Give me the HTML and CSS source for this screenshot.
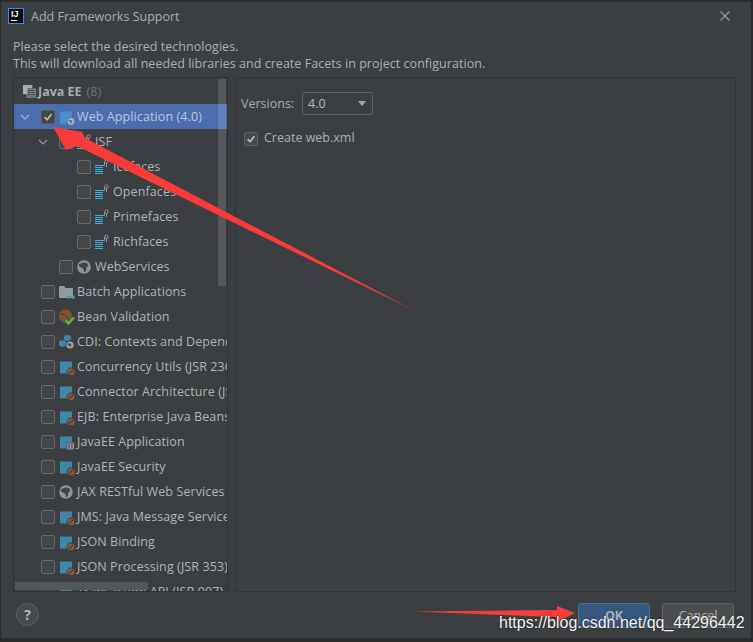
FILE: index.html
```html
<!DOCTYPE html>
<html lang="en">
<head>
<meta charset="utf-8">
<title>Add Frameworks Support</title>
<link rel="stylesheet" href="styles.css">
</head>
<body>
<svg class="defs" width="0" height="0" aria-hidden="true">
  <defs>
    <symbol id="bean" viewBox="0 0 8 8">
      <circle cx="4" cy="4" r="3.6" fill="#8c5a33"/>
      <path d="M1.6 6 6.2 1.8" stroke="#3c3f41" stroke-width="1.1"/>
    </symbol>
    <symbol id="i-module" viewBox="0 0 16 16">
      <rect x="1" y="2.500" width="12" height="12" fill="#3f87a8"/>
      <circle cx="12" cy="13" r="4.4" fill="#3c3f41"/>
      <use href="#bean" x="8" y="9" width="8" height="8"/>
    </symbol>
    <symbol id="i-web" viewBox="0 0 16 16">
      <rect x="1" y="2.500" width="12" height="12" fill="#4a8fc9"/>
      <circle cx="12" cy="12.500" r="4.200" fill="#4b6eaf"/>
      <circle cx="12" cy="12.500" r="3.400" fill="#9fb0c4"/>
      <path d="M10 11h2.600l.6 1.600-1.400 2.400-.6-2.200-1.600-.6z" fill="#4b6eaf"/>
    </symbol>
    <symbol id="i-jsf" viewBox="0 0 16 16">
      <path d="M0 6.500h8M0 8.500h8M0 10.500h8M0 12.500h8M0 14.500h8" stroke="#3ab0e8" stroke-width="1.100"/>
      <path d="M8 6.500h1.500V3" stroke="#9a9da0" stroke-width=".9" fill="none"/>
      <circle cx="11.500" cy="2.600" r="1.700" fill="none" stroke="#9a9da0" stroke-width=".9"/>
      <path d="M11.500 4v4" stroke="#9a9da0" stroke-width=".9"/>
    </symbol>
    <symbol id="i-globe" viewBox="0 0 14 14">
      <circle cx="7" cy="7" r="6.800" fill="#8f9496"/>
      <path d="M2 4.500 6 2.500l4 .5 1.500 3-2 1-.5 4-2 1.500-.5-3.500-2.500-1.500-2-1.500z" fill="#3f4345"/>
    </symbol>
    <symbol id="i-batch" viewBox="0 0 16 16">
      <path d="M0 2h5l1.500 2H14v10H0z" fill="#8f9ba3"/>
      <circle cx="10" cy="13" r="1.800" fill="#4fa84f"/>
      <circle cx="14" cy="13" r="1.800" fill="#35a6dc"/>
    </symbol>
    <symbol id="i-beanv" viewBox="0 0 16 16">
      <circle cx="6.500" cy="7" r="6.800" fill="#7c5230"/>
      <path d="M1 5q5-1 9 6" stroke="#3c3f41" stroke-width="1" fill="none"/>
      <path d="M6.500 11.500l3 3 5.500-6" stroke="#5fb83f" stroke-width="2.200" fill="none"/>
    </symbol>
    <symbol id="i-cdi" viewBox="0 0 16 16">
      <ellipse cx="8.500" cy="4" rx="3.800" ry="3" fill="#3f87a8"/>
      <ellipse cx="3.500" cy="9.500" rx="4" ry="3.200" fill="#3f87a8"/>
      <circle cx="11" cy="11" r="4.400" fill="#3c3f41"/>
      <circle cx="11" cy="11" r="3.600" fill="#9aa2a8"/>
      <path d="M9 9.500h2.600l.6 1.600-1.400 2.400-.6-2.200-1.600-.6z" fill="#3c3f41"/>
    </symbol>
    <symbol id="i-app" viewBox="0 0 16 16">
      <rect x="1" y="2.500" width="12" height="12" fill="#3f87a8"/>
      <rect x="7.500" y="8" width="8" height="8" fill="#3c3f41"/>
      <path d="M8.500 9h6v6h-6zM8.500 11h6M8.500 13h6M11.500 9v6" fill="none" stroke="#a8adb0" stroke-width=".8"/>
    </symbol>
    <symbol id="i-ee" viewBox="0 0 14 14">
      <path d="M0 0h10v3.500H4.500V10H0z" fill="#a9adb0"/>
      <rect x="4.500" y="4.500" width="8.500" height="8.500" fill="#3c3f41" stroke="#a9adb0"/>
      <path d="M6 7h5.500M6 9h5.500M6 11h5.500" stroke="#a9adb0" stroke-width=".8"/>
    </symbol>
    <symbol id="i-check" viewBox="0 0 14 14">
      <path d="M3 7.200l3 3 5-6.600" fill="none" stroke="#b8bcbe" stroke-width="2"/>
    </symbol>
  </defs>
</svg>

<main class="dialog">
  <header class="titlebar">
    <span class="logo"><span class="logo-text">IJ</span><span class="logo-bar"></span></span>
    <h1 class="title">Add Frameworks Support</h1>
    <svg class="close" viewBox="0 0 10 10"><path d="M.5.5l9 9M9.500.5l-9 9" stroke="#9a9c9e" stroke-width="1.100"/></svg>
  </header>

  <p class="desc">Please select the desired technologies.<br>This will download all needed libraries and create Facets in project configuration.</p>

  <div class="panes">
    <section class="tree">
      <div class="group">
        <svg class="group-icon" viewBox="0 0 14 14"><use href="#i-ee"/></svg>
        <b class="group-name">Java EE</b>
        <span class="group-count">(8)</span>
      </div>

      <div class="row l0 selected">
        <svg class="chev" viewBox="0 0 10 6"><path d="M1 1l4 4 4-4" fill="none" stroke="#a9b4c8" stroke-width="1.200"/></svg>
        <span class="cb on"><svg viewBox="0 0 14 14"><use href="#i-check"/></svg></span>
        <svg class="ico"><use href="#i-web"/></svg>
        <span class="label">Web Application (4.0)</span>
      </div>
      <div class="row l1">
        <svg class="chev" viewBox="0 0 10 6"><path d="M1 1l4 4 4-4" fill="none" stroke="#9a9c9e" stroke-width="1.200"/></svg>
        <span class="cb"></span><svg class="ico"><use href="#i-jsf"/></svg><span class="label">JSF</span>
      </div>
      <div class="row l2"><span class="slot"></span><span class="cb"></span><svg class="ico"><use href="#i-jsf"/></svg><span class="label">Icefaces</span></div>
      <div class="row l2"><span class="slot"></span><span class="cb"></span><svg class="ico"><use href="#i-jsf"/></svg><span class="label">Openfaces</span></div>
      <div class="row l2"><span class="slot"></span><span class="cb"></span><svg class="ico"><use href="#i-jsf"/></svg><span class="label">Primefaces</span></div>
      <div class="row l2"><span class="slot"></span><span class="cb"></span><svg class="ico"><use href="#i-jsf"/></svg><span class="label">Richfaces</span></div>
      <div class="row l1"><span class="slot"></span><span class="cb"></span><svg class="ico"><use href="#i-globe" width="14" height="14" y="1"/></svg><span class="label">WebServices</span></div>
      <div class="row l0"><span class="slot"></span><span class="cb"></span><svg class="ico"><use href="#i-batch"/></svg><span class="label">Batch Applications</span></div>
      <div class="row l0"><span class="slot"></span><span class="cb"></span><svg class="ico"><use href="#i-beanv"/></svg><span class="label">Bean Validation</span></div>
      <div class="row l0"><span class="slot"></span><span class="cb"></span><svg class="ico"><use href="#i-cdi"/></svg><span class="label">CDI: Contexts and Dependency Injection</span></div>
      <div class="row l0"><span class="slot"></span><span class="cb"></span><svg class="ico"><use href="#i-module"/></svg><span class="label">Concurrency Utils (JSR 236)</span></div>
      <div class="row l0"><span class="slot"></span><span class="cb"></span><svg class="ico"><use href="#i-module"/></svg><span class="label">Connector Architecture (JSR 322)</span></div>
      <div class="row l0"><span class="slot"></span><span class="cb"></span><svg class="ico"><use href="#i-module"/></svg><span class="label">EJB: Enterprise Java Beans</span></div>
      <div class="row l0"><span class="slot"></span><span class="cb"></span><svg class="ico"><use href="#i-app"/></svg><span class="label">JavaEE Application</span></div>
      <div class="row l0"><span class="slot"></span><span class="cb"></span><svg class="ico"><use href="#i-module"/></svg><span class="label">JavaEE Security</span></div>
      <div class="row l0"><span class="slot"></span><span class="cb"></span><svg class="ico"><use href="#i-globe" width="14" height="14" y="1"/></svg><span class="label">JAX RESTful Web Services</span></div>
      <div class="row l0"><span class="slot"></span><span class="cb"></span><svg class="ico"><use href="#i-module"/></svg><span class="label">JMS: Java Message Service</span></div>
      <div class="row l0"><span class="slot"></span><span class="cb"></span><svg class="ico"><use href="#i-module"/></svg><span class="label">JSON Binding</span></div>
      <div class="row l0"><span class="slot"></span><span class="cb"></span><svg class="ico"><use href="#i-module"/></svg><span class="label">JSON Processing (JSR 353)</span></div>
      <div class="row l0"><span class="slot"></span><span class="cb"></span><svg class="ico"><use href="#i-module"/></svg><span class="label">Transaction API (JSR 907)</span></div>

      <div class="vthumb"></div>
      <div class="hthumb"></div>
    </section>

    <section class="settings">
      <div class="versions">
        <span class="versions-label">Versions:</span>
        <div class="select"><span>4.0</span><span class="caret"></span></div>
      </div>
      <div class="option">
        <span class="cb on plain"><svg viewBox="0 0 14 14"><use href="#i-check"/></svg></span>
        <span class="option-label">Create web.xml</span>
      </div>
    </section>
  </div>

  <footer class="footer">
    <span class="help">?</span>
    <div class="buttons">
      <span class="btn primary">OK</span>
      <span class="btn">Cancel</span>
    </div>
  </footer>
</main>

<svg class="arrows" viewBox="0 0 753 642" aria-hidden="true">
  <polygon points="53,127 82,132 85,138 415,311 77,146 66,150" fill="#fb3a3a"/>
  <polygon points="413,611.500 557,610 557,606 575,613 557,622 557,617" fill="#fb3a3a"/>
</svg>
<span class="watermark">https://blog.csdn.net/qq_44296442</span>
</body>
</html>
```

FILE: styles.css
```css
* { box-sizing: border-box; }
html, body { margin: 0; height: 100%; }
body {
  position: relative;
  width: 753px;
  height: 642px;
  overflow: hidden;
  background: #2a2b2c;
  font-family: "Open Sans", "Noto Sans", sans-serif;
  font-size: 12.5px;
  color: #b4b8ba;
}
.defs { position: absolute; }

.dialog {
  width: 750px;
  height: 636px;
  margin: 2px 0 0 1px;
  background: #3c3f41;
  display: flex;
  flex-direction: column;
}

.titlebar {
  height: 28px;
  flex: none;
  display: flex;
  align-items: center;
  padding: 0 21px 0 7px;
}
.logo {
  width: 16px;
  height: 16px;
  background: #000;
  border: 1px solid #3c8fe0;
  display: flex;
  flex-direction: column;
  padding: 1px 2px;
  margin-right: 7px;
  flex: none;
}
.logo-text { font: bold 9px/9px "Liberation Sans", sans-serif; color: #fff; }
.logo-bar { width: 6px; height: 1px; background: #fff; margin-top: 1px; }
.title { margin: 0; font-size: 12.5px; font-weight: 400; color: #a8acae; flex: 1; }
.close { width: 10px; height: 10px; flex: none; }

.desc {
  margin: 9px 0 0;
  padding-left: 12px;
  line-height: 16.500px;
  letter-spacing: .035px;
  color: #abb0b2;
}

.panes {
  display: flex;
  gap: 7px;
  margin: 5px 15px 0 12px;
  height: 515px;
  flex: none;
}

.tree {
  position: relative;
  width: 215px;
  flex: none;
  border: 1px solid #313335;
  overflow: hidden;
}
.group {
  height: 26px;
  display: flex;
  align-items: center;
  padding: 1px 0 0 9px;
}
.group-icon { width: 13px; height: 13px; margin-right: 2px; flex: none; }
.group-name { font-weight: 700; color: #a9adaf; margin-right: 5px; }
.group-count { color: #6f7375; }

.row {
  height: 25px;
  width: 400px;
  display: flex;
  align-items: center;
}
.l0 { padding-left: 2px; }
.l1 { padding-left: 20px; }
.l2 { padding-left: 38px; }
.selected { background: #4b6eaf; width: 100%; }
.selected .label { color: #bcc6d8; }
.slot, .chev { width: 18px; flex: none; margin-right: 7px; }
.chev { height: 6px; padding: 0 4px; }
.cb {
  width: 14px;
  height: 14px;
  flex: none;
  border: 1px solid #666a6c;
  border-radius: 2px;
  background: #43474a;
  display: block;
}
.cb svg { display: block; width: 12px; height: 12px; }
.cb.on { background: #45494b; border-color: #5e6264; }
.selected .cb.on { background: #434547; border-color: #55585a; }
.ico { width: 16px; height: 16px; flex: none; margin: 0 2px 0 4px; }
.label { white-space: nowrap; color: #aeb4b8; letter-spacing: .1px; }

.vthumb {
  position: absolute;
  top: 1px;
  right: 1px;
  width: 8px;
  height: 207px;
  background: rgba(255, 255, 255, .13);
}
.hthumb {
  position: absolute;
  left: 1px;
  bottom: 1px;
  width: 133px;
  height: 8px;
  background: #545759;
}

.settings {
  flex: 1;
  border: 1px solid #313335;
  padding: 14px 0 0 5px;
}
.versions { display: flex; align-items: center; }
.versions-label { width: 61px; color: #a8aeb2; }
.select {
  width: 71px;
  height: 23px;
  border: 1px solid #5e6264;
  border-radius: 2px;
  display: flex;
  align-items: center;
  justify-content: space-between;
  padding: 0 6px 0 5px;
  color: #b4b8ba;
}
.caret {
  width: 0;
  height: 0;
  border-left: 4.500px solid transparent;
  border-right: 4.500px solid transparent;
  border-top: 5px solid #a4a8aa;
}
.option { display: flex; align-items: center; margin-top: 14px; padding-left: 3px; }
.option-label { margin: 0 0 2px 6px; color: #a8aeb2; }

.footer {
  flex: 1;
  display: flex;
  align-items: flex-start;
  justify-content: space-between;
  padding: 11px 17px 0 15px;
}
.help {
  width: 23px;
  height: 23px;
  border-radius: 50%;
  border: 1px solid #5e6264;
  background: #484b4d;
  display: flex;
  align-items: center;
  justify-content: center;
  font-weight: 700;
  font-size: 14px;
  color: #b4b8ba;
}
.buttons { display: flex; gap: 12px; }
.btn {
  width: 72px;
  height: 25px;
  border: 1px solid #5e6264;
  border-radius: 3px;
  background: #4b4e50;
  display: flex;
  align-items: center;
  justify-content: center;
  color: #a8acae;
}
.btn.primary {
  background: #365880;
  border-color: #4c708c;
  font-weight: 700;
  color: #a8b0b8;
}

.arrows { position: absolute; inset: 0; width: 753px; height: 642px; }
.watermark {
  position: absolute;
  left: 499px;
  top: 613px;
  font: 16px/20px "Liberation Sans", sans-serif;
  color: #f2f2f2;
  text-shadow: 0 0 2px #222;
  white-space: nowrap;
}
```
